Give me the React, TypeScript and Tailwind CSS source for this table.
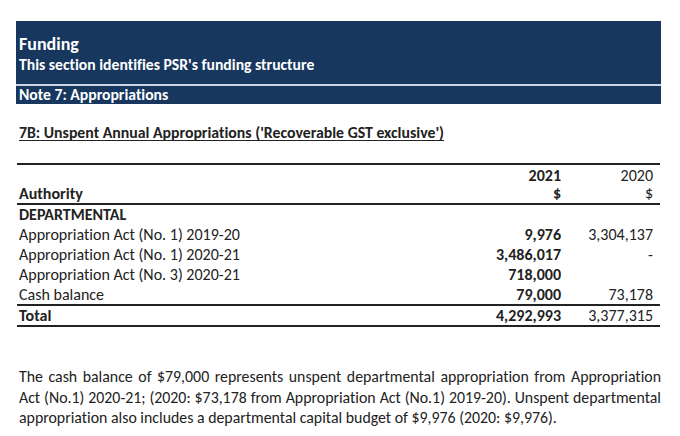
import React from "react";

const font = { fontFamily: "Carlito, 'Liberation Sans Narrow', 'Open Sans', sans-serif", fontVariantLigatures: "none" as const };

type Row = { label: string; a: string; b: string };
const rows: Row[] = [
  { label: "Appropriation Act (No. 1) 2019-20", a: "9,976", b: "3,304,137" },
  { label: "Appropriation Act (No. 1) 2020-21", a: "3,486,017", b: "-" },
  { label: "Appropriation Act (No. 3) 2020-21", a: "718,000", b: "" },
];

export default function App() {
  return (
    <div className="w-[680px] h-[436px] bg-white text-[#222] overflow-hidden" style={font}>
      <div className="pt-[21px] pl-4 pr-[19px]">
        <div className="bg-[#17375e] text-white">
          <div className="h-[65px] px-[3px] pt-[12px] border-b-2 border-[#c9d6e6]">
            <div className="text-[18px] font-bold leading-[22px]">Funding</div>
            <div className="text-[15.7px] font-bold leading-[20px]">This section identifies PSR's funding structure</div>
          </div>
          <div className="h-[18px] px-[3px] text-[15.7px] font-bold leading-[18px]">Note 7: Appropriations</div>
        </div>
      </div>

      <div className="pl-[19px] pt-[19px] text-[15.8px] font-bold underline underline-offset-2 leading-[20px]">
        7B: Unspent Annual Appropriations ('Recoverable GST exclusive')
      </div>

      <div className="mt-[20px] ml-[17px] w-[643px] text-[16px] leading-[20px]">
        <div className="border-t-2 border-[#222]" />
        <div className="flex h-[18px] mt-[1px]">
          <div className="flex-1" />
          <div className="w-[100px] text-right font-bold pr-[3px]">2021</div>
          <div className="w-[96px] text-right pr-[7px]">2020</div>
        </div>
        <div className="flex h-[19px]">
          <div className="flex-1 pl-[2px] font-bold">Authority</div>
          <div className="w-[100px] text-right font-bold pr-[3px]">$</div>
          <div className="w-[96px] text-right pr-[7px]">$</div>
        </div>
        <div className="border-t-2 border-[#222]" />
        <div className="pl-[2px] font-bold h-[20px]">DEPARTMENTAL</div>
        {rows.map((r) => (
          <div key={r.label} className="flex h-[20px]">
            <div className="flex-1 pl-[2px]">{r.label}</div>
            <div className="w-[100px] text-right font-bold pr-[3px]">{r.a}</div>
            <div className="w-[96px] text-right pr-[7px]">{r.b}</div>
          </div>
        ))}
        <div className="flex h-[19px]">
          <div className="flex-1 pl-[2px]">Cash balance</div>
          <div className="w-[100px] text-right font-bold pr-[3px]">79,000</div>
          <div className="w-[96px] text-right pr-[7px]">73,178</div>
        </div>
        <div className="border-t-2 border-[#222]" />
        <div className="flex h-[19px]">
          <div className="flex-1 pl-[2px] font-bold">Total</div>
          <div className="w-[100px] text-right font-bold pr-[3px]">4,292,993</div>
          <div className="w-[96px] text-right pr-[7px]">3,377,315</div>
        </div>
        <div className="border-t-2 border-[#222]" />
      </div>

      <p className="mt-[40px] ml-[19px] w-[642px] text-[15.85px] leading-[20.5px] text-justify">
        The cash balance of $79,000 represents unspent departmental appropriation from Appropriation Act (No.1) 2020-21; (2020: $73,178 from Appropriation Act (No.1) 2019-20). Unspent departmental appropriation also includes a departmental capital budget of $9,976 (2020: $9,976).
      </p>
    </div>
  );
}
